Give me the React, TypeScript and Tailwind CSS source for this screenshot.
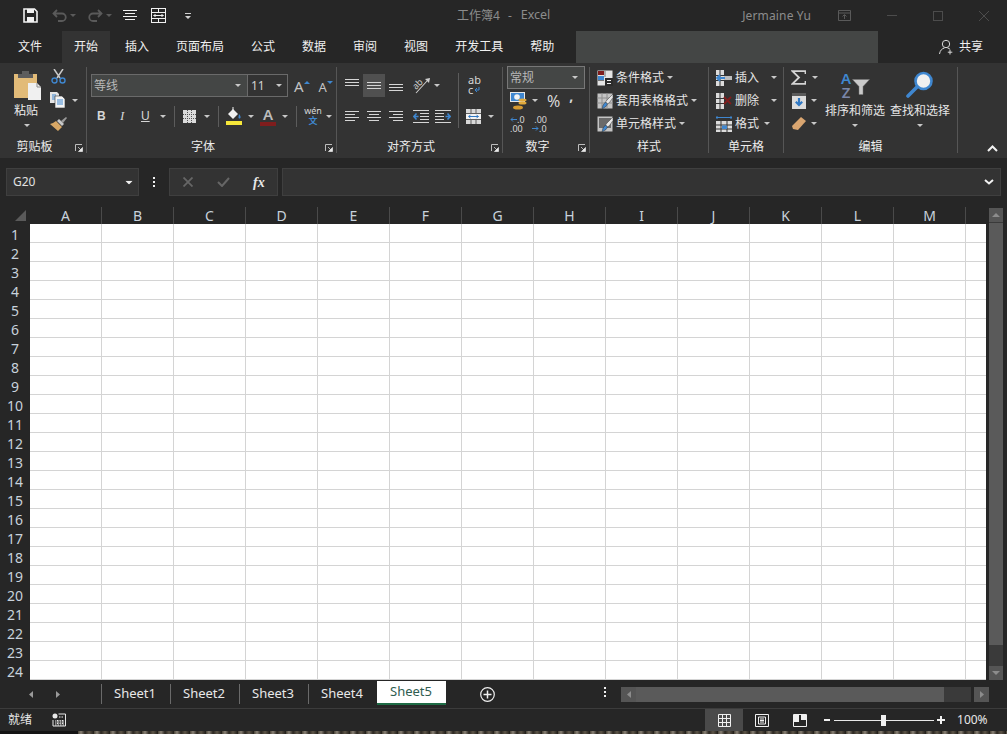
import React from 'react';

const COLS = ['A', 'B', 'C', 'D', 'E', 'F', 'G', 'H', 'I', 'J', 'K', 'L', 'M'];
const ROWS = Array.from({ length: 24 }, (_, i) => i + 1);
const TABS = ['Sheet1', 'Sheet2', 'Sheet3', 'Sheet4'];
const GRID_COLS = 'grid grid-cols-[30px_repeat(13,72px)_20px]';

function Caret({ className = '', color = '#c8c8c8' }: { className?: string; color?: string }) {
  return (
    <svg width="6" height="3" viewBox="0 0 6 3" className={`shrink-0 ${className}`}>
      <path d="M0 0h6L3 3z" fill={color} />
    </svg>
  );
}

// horizontal text-align style glyphs
function Lines({ rows, w = 14, h = 11, color = '#d6d6d6' }: { rows: [number, number, number][]; w?: number; h?: number; color?: string }) {
  return (
    <svg width={w} height={h} viewBox={`0 0 ${w} ${h}`} className="shrink-0">
      {rows.map(([a, b, y], i) => (
        <rect key={i} x={a} y={y} width={b - a} height="1" fill={color} />
      ))}
    </svg>
  );
}

const L3: [number, number, number][] = [[0, 14, 0], [0, 14, 3], [0, 14, 6]];
const ALIGN_L: [number, number, number][] = [[0, 14, 0], [0, 10, 3], [0, 14, 6], [0, 10, 9]];
const ALIGN_C: [number, number, number][] = [[0, 14, 0], [2, 12, 3], [0, 14, 6], [2, 12, 9]];
const ALIGN_R: [number, number, number][] = [[0, 14, 0], [4, 14, 3], [0, 14, 6], [4, 14, 9]];

function Sep({ className = '' }: { className?: string }) {
  return <div className={`w-px h-[21px] bg-[#5c5c5c] shrink-0 ${className}`} />;
}

function Launcher() {
  return (
    <svg width="8" height="8" viewBox="0 0 8 8" className="absolute right-[3px] bottom-[1px]">
      <path d="M.5 7V.5H7" fill="none" stroke="#bdbdbd" />
      <path d="M3 3l3.4 3.4M7.5 3.5v4h-4z" fill="#e8e8e8" stroke="#e8e8e8" strokeWidth=".7" />
    </svg>
  );
}

function Group({ w, label, launcher, children }: { w: string; label: string; launcher?: boolean; children: React.ReactNode }) {
  return (
    <div className={`relative h-full border-r border-[#565656] flex flex-col shrink-0 ${w}`}>
      <div className="h-[71px]">{children}</div>
      <div className={`h-[15px] pt-[2px] flex items-center justify-center text-[12px] text-[#ececec] ${launcher ? 'pr-[17px]' : ''}`}>{label}</div>
      {launcher && <Launcher />}
    </div>
  );
}

function SaveIcon() {
  return (
    <svg width="15" height="15" viewBox="0 0 15 15">
      <path d="M1 1h10.5L14 3.5V14H1z" fill="none" stroke="#f2f2f2" strokeWidth="1.6" />
      <rect x="4" y="1" width="7" height="4" fill="#f2f2f2" />
      <rect x="4" y="9" width="7" height="5" fill="#f2f2f2" />
    </svg>
  );
}

function UndoIcon({ flip }: { flip?: boolean }) {
  return (
    <svg width="15" height="13" viewBox="0 0 15 13" className={flip ? '-scale-x-100' : ''}>
      <path d="M5 1L1.5 4.5 5 8M1.5 4.5H10a3.7 3.7 0 0 1 0 7.5H6" fill="none" stroke="#5a5a5a" strokeWidth="1.8" />
    </svg>
  );
}

function MergeOutline() {
  return (
    <svg width="15" height="15" viewBox="0 0 15 15" className="shrink-0">
      <rect x=".5" y=".5" width="14" height="14" fill="none" stroke="#f0f0f0" />
      <path d="M1 4.5h13M1 10.5h13M7.5 1v3M7.5 11v3" stroke="#f0f0f0" />
      <path d="M2.5 7.5h10M4.5 6L3 7.5 4.5 9M10.5 6L12 7.5 10.5 9" fill="none" stroke="#f0f0f0" />
    </svg>
  );
}

function MergeFilled() {
  return (
    <svg width="15" height="15" viewBox="0 0 15 15" className="shrink-0">
      <rect width="15" height="15" fill="#d9d9d9" />
      <path d="M0 4.500h15M0 10.500h15M5 0v4M10 0v4M5 11v4M10 11v4" stroke="#5f5f5f" />
      <rect x="0" y="5" width="15" height="5" fill="#f4f4f4" />
      <path d="M2.500 7.500h10M4.500 5.800L2.800 7.500l1.700 1.700M10.500 5.800l1.700 1.700-1.700 1.700" fill="none" stroke="#2f78c4" />
    </svg>
  );
}

function PasteIcon() {
  return (
    <svg width="29" height="30" viewBox="0 0 29 30">
      <path d="M1 4h23v24H1z" fill="#e2bb78" />
      <path d="M5 4h15v4H5zM9 1h7v3H9z" fill="#5d5d5d" />
      <path d="M15 13h9l4 4v13H15z" fill="#f0f0f0" />
      <path d="M24 13v4h4" fill="none" stroke="#8a8a8a" />
    </svg>
  );
}

function CutIcon() {
  return (
    <svg width="15" height="15" viewBox="0 0 15 15">
      <path d="M3 0l6 9M12 0L6 9" stroke="#c9c9c9" strokeWidth="1.5" />
      <circle cx="3.5" cy="11.5" r="2.5" fill="none" stroke="#3f87d0" strokeWidth="1.4" />
      <circle cx="11.5" cy="11.5" r="2.5" fill="none" stroke="#3f87d0" strokeWidth="1.4" />
    </svg>
  );
}

function CopyIcon() {
  return (
    <svg width="15" height="16" viewBox="0 0 15 16">
      <path d="M0 0h7l2 2v9H0z" fill="#e4e4e4" />
      <path d="M2 3h4M2 5h5M2 7h5" stroke="#3f87d0" />
      <path d="M5 4h7l3 3v9H5z" fill="#f4f4f4" stroke="#333" strokeWidth=".6" />
      <path d="M7 8h6M7 10h6M7 12h6" stroke="#3f87d0" />
    </svg>
  );
}

function BrushIcon() {
  return (
    <svg width="17" height="15" viewBox="0 0 17 15">
      <path d="M11 5l5-4 1 1-4 5z" fill="#9a9a9a" />
      <path d="M9 3l5 5-2 2-5-5z" fill="#c9c9c9" />
      <path d="M6 5l6 6-4 4-8-7 3-1z" fill="#d9a866" />
    </svg>
  );
}

function BorderIcon() {
  return (
    <svg width="13" height="13" viewBox="0 0 13 13" className="shrink-0">
      <rect width="13" height="13" fill="#dcdcdc" />
      <path d="M4.5 0v13M8.5 0v13M0 4.5h13M0 8.5h13" stroke="#555" strokeDasharray="1 1" />
    </svg>
  );
}

function FillIcon() {
  return (
    <svg width="16" height="18" viewBox="0 0 16 18" className="shrink-0">
      <path d="M7 2l5 5-5 5-5-5z" fill="#f2f2f2" />
      <path d="M7 0v4" stroke="#f2f2f2" />
      <path d="M13 7c1.5 2 2 3 1.3 4s-2 .5-1.8-1z" fill="#3f87d0" />
      <rect y="14" width="16" height="4" fill="#f6e73a" />
    </svg>
  );
}

function FontColorIcon() {
  return (
    <div className="w-4 shrink-0 flex flex-col items-center">
      <span className="text-[15px] leading-[14px] font-semibold text-[#bdbdbd]">A</span>
      <span className="w-4 h-[4px] mt-px bg-[#7f1d1d]" />
    </div>
  );
}

function WenIcon() {
  return (
    <div className="w-4 shrink-0 flex flex-col items-center text-[9px] leading-[10px]">
      <span className="text-[#d8d8d8]">wén</span>
      <span className="text-[#3f87d0] font-semibold">文</span>
    </div>
  );
}

function GrowFont({ up, size }: { up?: boolean; size: string }) {
  return (
    <div className="relative flex items-end h-[16px]">
      <span className={`${size} leading-none text-[#c4c4c4]`}>A</span>
      <svg width="6" height="3" viewBox="0 0 6 3" className="mb-[10px]">
        <path d={up ? 'M3 0l3 3H0z' : 'M0 0h6L3 3z'} fill="#3f87d0" />
      </svg>
    </div>
  );
}

function OrientIcon() {
  return (
    <svg width="18" height="17" viewBox="0 0 18 17" className="shrink-0">
      <text x="0" y="10" fontSize="9" fill="#d0d0d0" fontFamily="Noto Sans" transform="rotate(-45 5 8)">ab</text>
      <path d="M3 16L14 4" stroke="#d0d0d0" strokeWidth="1.100" />
      <path d="M12 2l5-1-1 5z" fill="#d0d0d0" />
    </svg>
  );
}

function WrapIcon() {
  return (
    <div className="w-[14px] shrink-0 flex flex-col text-[11px] leading-[10px] text-[#d8d8d8]">
      <span>ab</span>
      <span className="flex items-center">
        c
        <svg width="6" height="6" viewBox="0 0 6 6" className="ml-px">
          <path d="M5 0v3H1M3 1L1 3l2 2" fill="none" stroke="#3f87d0" />
        </svg>
      </span>
    </div>
  );
}

function IndentIcon({ flip }: { flip?: boolean }) {
  return (
    <svg width="16" height="13" viewBox="0 0 16 13" className={`shrink-0 ${flip ? '-scale-x-100' : ''}`}>
      <path d="M0 .5h16M7 3.5h9M7 6.5h9M7 9.5h9M0 12.5h16" stroke="#d6d6d6" />
      <path d="M5.5 6.5H1M3.5 3.5L.8 6.5l2.7 3" fill="none" stroke="#3f87d0" strokeWidth="1.6" />
    </svg>
  );
}

function CurrencyIcon() {
  return (
    <svg width="17" height="18" viewBox="0 0 17 18" className="shrink-0">
      <rect y="0" width="15" height="10" fill="#e8e8e8" />
      <rect x="1" y="1" width="13" height="8" fill="#3f87d0" />
      <circle cx="7" cy="5" r="2.800" fill="#f2f2f2" />
      <ellipse cx="12.500" cy="8" rx="4" ry="1.500" fill="#e0a93c" />
      <ellipse cx="12.500" cy="11" rx="4" ry="1.500" fill="#e0a93c" />
      <ellipse cx="8" cy="15.500" rx="5" ry="2" fill="#d59a32" />
    </svg>
  );
}

function DecimalIcon({ more }: { more?: boolean }) {
  return (
    <div className="w-[15px] shrink-0 flex flex-col text-[9px] leading-[9px] text-[#d8d8d8]">
      {more ? (
        <>
          <span className="flex items-center">
            <svg width="7" height="5" viewBox="0 0 7 5"><path d="M7 2.5H1M3 .5l-2 2 2 2" fill="none" stroke="#3f87d0" /></svg>
            .0
          </span>
          <span>.00</span>
        </>
      ) : (
        <>
          <span className="text-right">.00</span>
          <span className="flex items-center">
            <svg width="7" height="5" viewBox="0 0 7 5"><path d="M0 2.5h6M4 .5l2 2-2 2" fill="none" stroke="#3f87d0" /></svg>
            .0
          </span>
        </>
      )}
    </div>
  );
}

function TableIcon({ kind }: { kind: 'cond' | 'table' | 'cell' }) {
  return (
    <svg width="16" height="16" viewBox="0 0 16 16" className="shrink-0">
      <rect width="15" height="15" x=".5" y=".5" fill={kind === 'cond' ? '#e4e4e4' : '#c4c4c4'} />
      {kind === 'cond' && (
        <>
          <rect x="1" y="1" width="6" height="4" fill="#7f1d1d" />
          <rect x="1" y="6" width="6" height="4" fill="#3f87d0" />
          <rect x="8" y="8" width="8" height="8" fill="#2b2b2b" />
          <path d="M10 10.5h4M10 13.5h4" stroke="#f0f0f0" />
          <path d="M8 1v6M1 10.5h6" stroke="#777" />
        </>
      )}
      {kind === 'table' && <path d="M5 0v16M10 0v16M0 5h16M0 10h16" stroke="#8e8e8e" />}
      {kind === 'cell' && <rect x="2" y="2" width="12" height="10" fill="#6a6a6a" />}
      {kind !== 'cond' && (
        <>
          <path d="M16 1l-6 6-1.500 2 2 2 2-1.500 3.500-5z" fill="#e8e8e8" stroke="#333" strokeWidth=".5" />
          <path d="M8.500 9l2 2-1.500 2.500-4 2.500 1-4z" fill="#3f87d0" stroke="#333" strokeWidth=".5" />
        </>
      )}
    </svg>
  );
}

function CellOpIcon({ kind }: { kind: 'insert' | 'delete' | 'format' }) {
  return (
    <svg width="16" height="16" viewBox="0 0 16 16" className="shrink-0">
      {kind === 'format' ? (
        <>
          <path d="M0 1.5h16M1 0v3M15 0v3" stroke="#3f87d0" />
          <rect y="5" width="16" height="11" fill="#dcdcdc" />
          <path d="M5 5v11M11 5v11M0 9h16M0 13h16" stroke="#333" />
          <rect x="6" y="9.5" width="5" height="3.5" fill="#3f87d0" />
        </>
      ) : (
        <>
          <rect width="8" height="16" fill="#dcdcdc" />
          <path d="M4 0v16M0 5.500h8M0 10.500h8" stroke="#333" />
          {kind === 'insert' ? (
            <>
              <rect x="8" y="6" width="8" height="4" fill="#bdbdbd" />
              <path d="M9 8H1M4 5L1 8l3 3" fill="none" stroke="#3f87d0" strokeWidth="1.800" />
            </>
          ) : (
            <path d="M8 4l7 7M15 4l-7 7" stroke="#7f1d1d" strokeWidth="1.800" />
          )}
        </>
      )}
    </svg>
  );
}

function SortIcon() {
  return (
    <div className="flex items-center h-[28px]">
      <div className="w-[12px] flex flex-col items-center text-[15px] leading-[14px] font-semibold">
        <span className="text-[#3f87d0]">A</span>
        <span className="text-[#7a86a8]">Z</span>
      </div>
      <svg width="18" height="16" viewBox="0 0 18 16" className="mt-[3px]">
        <path d="M.5 .5h17l-6.500 7v8h-4v-8z" fill="#c9c9c9" stroke="#777" strokeWidth=".5" />
      </svg>
    </div>
  );
}

function FindIcon() {
  return (
    <svg width="28" height="28" viewBox="0 0 28 28">
      <circle cx="17.500" cy="10" r="8" fill="#f0f0f0" stroke="#3f87d0" strokeWidth="2.600" />
      <path d="M11 16L2 25" stroke="#3f87d0" strokeWidth="3.600" strokeLinecap="round" />
    </svg>
  );
}

function StyleRow({ kind, label, caretMl }: { kind: 'cond' | 'table' | 'cell'; label: string; caretMl: string }) {
  return (
    <div className="h-[23px] pl-[7px] flex items-center text-[12px] text-[#e6e6e6]">
      <TableIcon kind={kind} />
      <span className="ml-[3px]">{label}</span>
      <Caret className={caretMl} />
    </div>
  );
}

function CellRow({ kind, label, caretMl }: { kind: 'insert' | 'delete' | 'format'; label: string; caretMl: string }) {
  return (
    <div className="h-[23px] pl-[7px] flex items-center text-[12px] text-[#e6e6e6]">
      <CellOpIcon kind={kind} />
      <span className="ml-[3px]">{label}</span>
      <Caret className={caretMl} />
    </div>
  );
}

function Ribbon() {
  return (
    <div className="h-[95px] bg-[#333333] pt-[4px] pb-[5px] flex shrink-0 relative">
      <Group w="w-[87px]" label="剪贴板" launcher>
        <div className="flex h-full">
          <div className="w-[48px] pl-[13px] pt-[3px] flex flex-col items-start">
            <PasteIcon />
            <span className="text-[12px] leading-[16px] mt-[3px] ml-px text-[#ececec]">粘贴</span>
            <Caret className="mt-[5px] ml-[11px]" />
          </div>
          <div className="flex flex-col pt-[2px]">
            <div className="h-[15px] ml-[3px]"><CutIcon /></div>
            <div className="h-[16px] mt-[8px] ml-[2px] flex items-center"><CopyIcon /><Caret className="ml-[7px]" /></div>
            <div className="h-[15px] mt-[8px] ml-[2px]"><BrushIcon /></div>
          </div>
        </div>
      </Group>

      <Group w="w-[250px]" label="字体" launcher>
        <div className="pt-[7px]">
          <div className="h-[23px] pl-[4px] flex items-center">
            <div className="w-[157px] h-full bg-[#444645] border border-[#6a6a6a] pl-[2px] pr-[6px] flex items-center justify-between text-[12px] text-[#b8b8b8]">
              等线<Caret />
            </div>
            <div className="w-[40px] h-full bg-[#333] border border-l-0 border-[#6a6a6a] pl-[3px] pr-[5px] flex items-center justify-between text-[12px] text-[#d2d2d2]">
              11<Caret />
            </div>
            <div className="ml-[6px]"><GrowFont up size="text-[15px]" /></div>
            <div className="ml-[9px]"><GrowFont size="text-[13px]" /></div>
          </div>
          <div className="h-[22px] mt-[8px] pl-[10px] flex items-center text-[#d6d6d6]">
            <span className="w-2 text-[12px] font-bold font-['Liberation_Sans',sans-serif]">B</span>
            <span className="w-2 ml-[15px] text-[13px] italic font-['Liberation_Serif',serif]">I</span>
            <span className="w-[9px] ml-[13px] text-[12px] underline font-['Liberation_Sans',sans-serif]">U</span>
            <Caret className="ml-[10px]" />
            <Sep className="ml-[8px]" />
            <div className="ml-[8px]"><BorderIcon /></div>
            <Caret className="ml-[8px]" />
            <Sep className="ml-[8px]" />
            <div className="ml-[7px]"><FillIcon /></div>
            <Caret className="ml-[6px]" />
            <div className="ml-[6px]"><FontColorIcon /></div>
            <Caret className="ml-[6px]" />
            <Sep className="ml-[8px]" />
            <div className="ml-[8px]"><WenIcon /></div>
            <Caret className="ml-[5px]" />
          </div>
        </div>
      </Group>

      <Group w="w-[166px]" label="对齐方式" launcher>
        <div className="pt-[6px] flex">
          <div className="w-[121px] shrink-0">
            <div className="h-[24px] pl-[8px] flex items-center">
              <div className="-mt-[5px]"><Lines rows={L3} h={7} /></div>
              <div className="ml-[4px] w-[22px] h-[23px] bg-[#505050] flex items-center justify-center"><Lines rows={L3} h={7} /></div>
              <div className="ml-[4px] mt-[5px]"><Lines rows={L3} h={7} /></div>
              <div className="ml-[10px]"><OrientIcon /></div>
              <Caret className="ml-[3px]" />
            </div>
            <div className="h-[22px] mt-[8px] pl-[8px] flex items-center">
              <Lines rows={ALIGN_L} />
              <div className="ml-[8px]"><Lines rows={ALIGN_C} /></div>
              <div className="ml-[8px]"><Lines rows={ALIGN_R} /></div>
              <div className="ml-[10px]"><IndentIcon /></div>
              <div className="ml-[6px]"><IndentIcon flip /></div>
            </div>
          </div>
          <div className="w-px h-[55px] bg-[#5c5c5c] shrink-0" />
          <div>
            <div className="h-[24px] pl-[9px] flex items-center"><WrapIcon /></div>
            <div className="h-[22px] mt-[8px] pl-[7px] flex items-center">
              <MergeFilled />
              <Caret className="ml-[7px]" />
            </div>
          </div>
        </div>
      </Group>

      <Group w="w-[87px]" label="数字" launcher>
        <div className="-mt-px">
          <div className="ml-[4px] w-[78px] h-[23px] bg-[#444645] border border-[#777] pl-[2px] pr-[6px] flex items-center justify-between text-[12px] text-[#b8b8b8]">
            常规<Caret />
          </div>
          <div className="h-[23px] pl-[7px] flex items-center">
            <CurrencyIcon />
            <Caret className="ml-[5px]" />
            <span className="ml-[9px] text-[16px] leading-none text-[#d8d8d8]">%</span>
            <span className="ml-[9px] text-[14px] leading-none font-bold text-[#d8d8d8] -mt-[10px]">,</span>
          </div>
          <div className="h-[23px] pl-[7px] flex items-center">
            <DecimalIcon more />
            <div className="ml-[7px]"><DecimalIcon /></div>
          </div>
        </div>
      </Group>

      <Group w="w-[119px]" label="样式">
        <div className="-mt-px">
          <StyleRow kind="cond" label="条件格式" caretMl="ml-[3px]" />
          <StyleRow kind="table" label="套用表格格式" caretMl="ml-[3px]" />
          <StyleRow kind="cell" label="单元格样式" caretMl="ml-[3px]" />
        </div>
      </Group>

      <Group w="w-[75px]" label="单元格">
        <div className="-mt-px">
          <CellRow kind="insert" label="插入" caretMl="ml-[12px]" />
          <CellRow kind="delete" label="删除" caretMl="ml-[12px]" />
          <CellRow kind="format" label="格式" caretMl="ml-[5px]" />
        </div>
      </Group>

      <Group w="w-[174px]" label="编辑">
        <div className="flex h-full">
          <div className="w-[41px] shrink-0 -mt-px">
            <div className="h-[23px] pl-[7px] flex items-center">
              <svg width="15" height="15" viewBox="0 0 15 15" className="shrink-0">
                <path d="M14.500 4V1.200H1.500L8 7.500 1.500 13.800h13V11" fill="none" stroke="#d4d4d4" strokeWidth="1.800" />
              </svg>
              <Caret className="ml-[6px]" />
            </div>
            <div className="h-[23px] pl-[8px] flex items-center">
              <svg width="14" height="16" viewBox="0 0 14 16" className="shrink-0">
                <rect width="14" height="16" fill="#dcdcdc" />
                <rect width="14" height="3" fill="#5a5a5a" />
                <path d="M7 5v7M3.800 8.800L7 12l3.200-3.200" fill="none" stroke="#2f78c4" strokeWidth="2.200" />
              </svg>
              <Caret className="ml-[5px]" />
            </div>
            <div className="h-[23px] pl-[8px] flex items-center">
              <svg width="14" height="13" viewBox="0 0 14 13" className="shrink-0">
                <path d="M9 0l5 4-8 9-5-1-1-3z" fill="#d9a570" />
              </svg>
              <Caret className="ml-[5px]" />
            </div>
          </div>
          <div className="w-[60px] flex flex-col items-center pt-[4px]">
            <SortIcon />
            <span className="text-[12px] leading-[16px] mt-[4px] whitespace-nowrap text-[#e6e6e6]">排序和筛选</span>
            <Caret className="mt-[5px]" />
          </div>
          <div className="ml-[5px] w-[60px] flex flex-col items-center pt-[4px]">
            <div className="h-[28px]"><FindIcon /></div>
            <span className="text-[12px] leading-[16px] mt-[4px] whitespace-nowrap text-[#e6e6e6]">查找和选择</span>
            <Caret className="mt-[5px]" />
          </div>
        </div>
      </Group>

      <div className="flex-1 flex items-end justify-end pr-[9px] pb-[1px]">
        <svg width="11" height="7" viewBox="0 0 11 7">
          <path d="M1 6l4.500-4.500L10 6" fill="none" stroke="#f2f2f2" strokeWidth="2" />
        </svg>
      </div>
    </div>
  );
}

function TitleBar() {
  return (
    <div className="h-[31px] flex items-center shrink-0 bg-[#262626]">
      <div className="ml-[23px]"><SaveIcon /></div>
      <div className="ml-[14px]"><UndoIcon /></div>
      <Caret className="ml-[3px]" color="#5a5a5a" />
      <div className="ml-[12px]"><UndoIcon flip /></div>
      <Caret className="ml-[3px]" color="#5a5a5a" />
      <div className="ml-[11px]">
        <Lines rows={[[0, 14, 0], [2, 12, 3], [0, 14, 6], [2, 12, 9]]} color="#f0f0f0" />
      </div>
      <div className="ml-[14px]"><MergeOutline /></div>
      <svg width="6" height="6" viewBox="0 0 6 6" className="ml-[19px]">
        <path d="M0 0h6v1H0zM0 3h6L3 6z" fill="#d0d0d0" />
      </svg>
      <div className="ml-[266px] flex items-center text-[12px] text-[#8c8c8c]">
        <span>工作簿4</span>
        <span className="ml-[8px]">-</span>
        <span className="ml-[9px] text-[12.5px]">Excel</span>
      </div>
      <div className="ml-auto pr-[18px] flex items-center">
        <span className="text-[12px] tracking-[0.15px] text-[#8c8c8c]">Jermaine Yu</span>
        <svg width="13" height="11" viewBox="0 0 13 11" className="ml-[27px]">
          <path d="M.5.500h12v10H.5zM1 3h11M6.500 9V5M4.500 6.500l2-2 2 2" fill="none" stroke="#5a5a5a" />
        </svg>
        <div className="ml-[36px] w-[10px] h-px bg-[#4c4c4c]" />
        <div className="ml-[36px] w-[10px] h-[10px] border border-[#4c4c4c]" />
        <svg width="10" height="10" viewBox="0 0 10 10" className="ml-[36px]">
          <path d="M0 0l10 10M10 0L0 10" stroke="#4c4c4c" />
        </svg>
      </div>
    </div>
  );
}

function TabBar() {
  const tabs = ['插入', '页面布局', '公式', '数据', '审阅', '视图', '开发工具', '帮助'];
  return (
    <div className="h-[32px] flex items-stretch shrink-0 bg-[#262626] text-[12px] text-[#f0f0f0]">
      <div className="ml-[6px] px-3 flex items-center">文件</div>
      <div className="ml-[8px] px-3 flex items-center bg-[#333333]">开始</div>
      <div className="ml-[3px] flex gap-[3px]">
        {tabs.map(t => (
          <div key={t} className="px-3 flex items-center">{t}</div>
        ))}
      </div>
      <div className="ml-[10px] w-[302px] bg-[#444645]" />
      <div className="ml-auto pr-[24px] flex items-center">
        <svg width="15" height="16" viewBox="0 0 15 16">
          <circle cx="7" cy="5" r="3.700" fill="none" stroke="#d8d8d8" />
          <path d="M.5 15c.5-3.500 2.500-5.500 5-6M8.500 9c1 .2 2 .7 2.700 1.400" fill="none" stroke="#d8d8d8" />
          <path d="M11 11v4.500M8.800 13.200h4.500" stroke="#d8d8d8" />
        </svg>
        <span className="ml-[5px]">共享</span>
      </div>
    </div>
  );
}

function FormulaBar() {
  return (
    <div className="h-[49px] pt-[10px] px-[6px] flex shrink-0 bg-[#262626]">
      <div className="w-[133px] h-[28px] bg-[#333333] border border-[#3f3f3f] pl-[6px] pr-[6px] flex items-center justify-between text-[12px] text-[#e0e0e0]">
        G20
        <Caret color="#f0f0f0" className="scale-125" />
      </div>
      <div className="ml-[14px] w-[2px] h-[28px] flex flex-col items-center justify-center gap-[2px]">
        <span className="w-[2px] h-[2px] bg-[#f0f0f0]" />
        <span className="w-[2px] h-[2px] bg-[#f0f0f0]" />
        <span className="w-[2px] h-[2px] bg-[#f0f0f0]" />
      </div>
      <div className="ml-[14px] w-[109px] h-[28px] bg-[#333333] border border-[#3f3f3f] flex items-center">
        <svg width="10" height="10" viewBox="0 0 10 10" className="ml-[13px]">
          <path d="M.5.500l9 9M9.500.500l-9 9" stroke="#666" strokeWidth="1.800" />
        </svg>
        <svg width="13" height="10" viewBox="0 0 13 10" className="ml-[24px]">
          <path d="M1 5l4 4 7-8" fill="none" stroke="#666" strokeWidth="2" />
        </svg>
        <span className="ml-[23px] text-[14px] italic font-bold font-['Liberation_Serif',serif] text-[#e8e8e8]">fx</span>
      </div>
      <div className="ml-[4px] flex-1 h-[28px] bg-[#333333] border border-[#3f3f3f] flex items-center justify-end pr-[6px]">
        <svg width="10" height="6" viewBox="0 0 10 6">
          <path d="M1 1l4 3.500L9 1" fill="none" stroke="#f2f2f2" strokeWidth="2" />
        </svg>
      </div>
    </div>
  );
}

function ScrollButton({ children, className = '' }: { children: React.ReactNode; className?: string }) {
  return <div className={`bg-[#555555] flex items-center justify-center shrink-0 ${className}`}>{children}</div>;
}

function Sheet() {
  return (
    <div className="flex-1 flex min-h-0 bg-[#262626]">
      <div className="w-[989px] shrink-0">
        <div className={`${GRID_COLS} h-[17px]`}>
          <div className="pl-[15px] pt-[3px]">
            <svg width="11" height="11" viewBox="0 0 11 11">
              <path d="M11 0v11H0z" fill="#5a5a5a" />
            </svg>
          </div>
          {COLS.map(c => (
            <div key={c} className="border-r border-[#4a4a4a] flex items-center justify-center text-[14px] leading-none text-[#c8d2dc]">
              {c}
            </div>
          ))}
          <div />
        </div>
        {ROWS.map(r => (
          <div key={r} className={`${GRID_COLS} h-[19px]`}>
            <div className="flex items-center justify-center text-[14px] leading-none text-[#c8d2dc] pt-[2px]">{r}</div>
            {COLS.map(c => (
              <div key={c} className="bg-white border-r border-b border-[#d4d4d4]" />
            ))}
            <div className="bg-white border-b border-[#d4d4d4]" />
          </div>
        ))}
      </div>
      <div className="w-[14px] flex flex-col pt-px mb-[1px]">
        <ScrollButton className="h-[14px]">
          <svg width="8" height="4" viewBox="0 0 8 4"><path d="M4 0l4 4H0z" fill="#8c8c8c" /></svg>
        </ScrollButton>
        <div className="flex-1 flex flex-col bg-[#3a3a3a]">
          <div className="h-[422px] mt-px bg-[#5a5a5a]" />
        </div>
        <ScrollButton className="h-[14px]">
          <svg width="8" height="4" viewBox="0 0 8 4"><path d="M0 0h8L4 4z" fill="#8c8c8c" /></svg>
        </ScrollButton>
      </div>
    </div>
  );
}

function SheetTabs() {
  return (
    <div className="h-[28px] flex items-start shrink-0 bg-[#262626] border-b border-[#3c3c3c]">
      <div className="w-[101px] h-[27px] flex items-center shrink-0">
        <svg width="4" height="7" viewBox="0 0 4 7" className="ml-[29px]"><path d="M4 0v7L0 3.500z" fill="#9a9a9a" /></svg>
        <svg width="4" height="7" viewBox="0 0 4 7" className="ml-[23px]"><path d="M0 0v7l4-3.500z" fill="#9a9a9a" /></svg>
      </div>
      {TABS.map(t => (
        <div key={t} className="w-[69px] h-[20px] mt-[3px] border-l border-[#6a6a6a] pr-[2px] flex items-center justify-center text-[13px] text-[#e8e8e8] shrink-0">
          {t}
        </div>
      ))}
      <div className="w-[69px] h-[24px] bg-white border-b-2 border-[#1e6b45] pr-[1px] flex items-center justify-center text-[13px] text-[#2f5d50] shrink-0">
        Sheet5
      </div>
      <svg width="15" height="15" viewBox="0 0 15 15" className="ml-[34px] mt-[6px] shrink-0">
        <circle cx="7.500" cy="7.500" r="6.800" fill="none" stroke="#f0f0f0" strokeWidth="1.200" />
        <path d="M7.500 3.500v8M3.500 7.500h8" stroke="#f0f0f0" strokeWidth="1.500" />
      </svg>
      <div className="ml-[109px] mt-[6px] w-[2px] flex flex-col gap-[2px] shrink-0">
        <span className="w-[2px] h-[2px] bg-[#f0f0f0]" />
        <span className="w-[2px] h-[2px] bg-[#f0f0f0]" />
        <span className="w-[2px] h-[2px] bg-[#f0f0f0]" />
      </div>
      <div className="ml-[15px] mt-[6px] w-[368px] h-[15px] flex shrink-0">
        <ScrollButton className="w-[15px]">
          <svg width="4" height="7" viewBox="0 0 4 7"><path d="M4 0v7L0 3.500z" fill="#8c8c8c" /></svg>
        </ScrollButton>
        <div className="w-[308px] bg-[#5a5a5a] shrink-0" />
        <div className="w-[27px] bg-[#3a3a3a] shrink-0" />
        <div className="w-[3px] shrink-0" />
        <ScrollButton className="w-[15px]">
          <svg width="4" height="7" viewBox="0 0 4 7"><path d="M0 0v7l4-3.500z" fill="#8c8c8c" /></svg>
        </ScrollButton>
      </div>
    </div>
  );
}

function StatusBar() {
  return (
    <div className="h-[22px] flex items-center shrink-0 bg-[#262626] text-[12px] text-[#e8e8e8]">
      <span className="ml-[8px]">就绪</span>
      <svg width="14" height="14" viewBox="0 0 14 14" className="ml-[20px]">
        <circle cx="3" cy="3" r="2.500" fill="#e8e8e8" />
        <path d="M6.500 1h7v12H1V7" fill="none" stroke="#e8e8e8" />
        <path d="M3 8h9M3 10h9M3 12h9M5.500 7v5M8 7v5M10.500 7v5M7 4h5" stroke="#e8e8e8" strokeDasharray="1.500 1" />
      </svg>
      <div className="ml-[639px] w-[38px] h-full bg-[#4a4a4a] flex items-center justify-center">
        <svg width="13" height="13" viewBox="0 0 13 13">
          <path d="M.5.500h12v12H.5zM4.500.500v12M8.500.500v12M.5 4.500h12M.5 8.500h12" fill="none" stroke="#f0f0f0" />
        </svg>
      </div>
      <svg width="14" height="13" viewBox="0 0 14 13" className="ml-[12px]">
        <path d="M.5.500h13v12H.5z" fill="none" stroke="#f0f0f0" />
        <path d="M3.500 3h7v7h-7zM5 5h4M5 6.500h4M5 8h4" fill="none" stroke="#f0f0f0" />
      </svg>
      <svg width="14" height="13" viewBox="0 0 14 13" className="ml-[24px]">
        <path d="M.5.500h13v12H.5z" fill="none" stroke="#f0f0f0" />
        <path d="M1 1h5v7H1zM8 1h5v5H8z" fill="#f0f0f0" />
      </svg>
      <div className="ml-[17px] w-[6px] h-[2px] bg-[#f0f0f0]" />
      <div className="ml-[4px] w-[100px] h-px bg-[#e8e8e8] flex items-center">
        <div className="ml-[47px] w-[5px] h-[11px] bg-[#f0f0f0] shrink-0" />
      </div>
      <svg width="8" height="8" viewBox="0 0 8 8" className="ml-[3px]">
        <path d="M4 0v8M0 4h8" stroke="#f0f0f0" strokeWidth="2" />
      </svg>
      <span className="ml-[12px]">100%</span>
    </div>
  );
}

export default function App() {
  return (
    <div className="w-[1007px] h-screen overflow-hidden flex flex-col bg-[#262626] font-['Noto_Sans','Noto_Sans_CJK_SC',sans-serif]">
      <TitleBar />
      <TabBar />
      <Ribbon />
      <FormulaBar />
      <Sheet />
      <SheetTabs />
      <StatusBar />
      <div className="h-[3px] flex shrink-0">
        <div className="w-[78px] bg-[#141414]" />
        <div className="flex-1 bg-[repeating-linear-gradient(90deg,#4a4438_0px,#8a8276_3px,#2a2620_7px,#5d5548_11px,#1f1c18_16px)]" />
      </div>
    </div>
  );
}
